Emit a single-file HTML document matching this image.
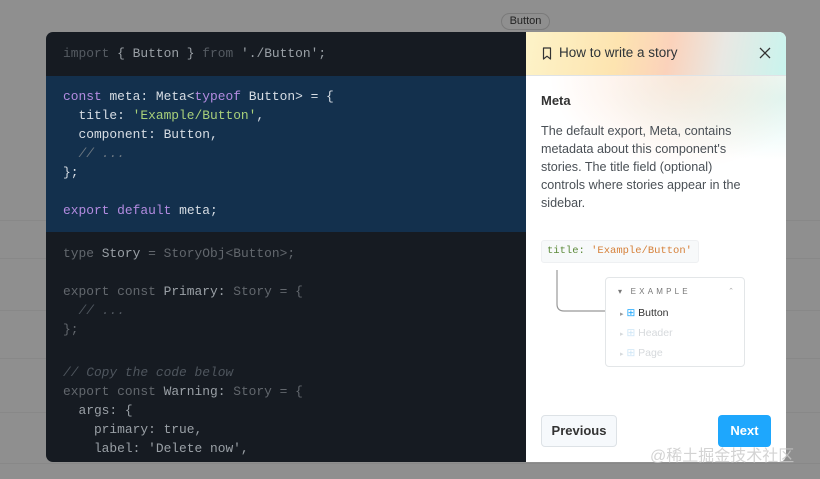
<!DOCTYPE html>
<html><head><meta charset="utf-8"><style>
*{margin:0;padding:0;box-sizing:border-box}
body{width:820px;height:479px;background:#8f8f8f;position:relative;overflow:hidden;font-family:"Liberation Sans",sans-serif}
.bl{position:absolute;height:1px;background:#888;left:0;right:0}
.tag{position:absolute;left:501px;top:13px;width:49px;height:17px;border:1px solid #7a7a7a;border-radius:9px;font-size:11px;color:#222;text-align:center;line-height:15px}
.modal{position:absolute;left:46px;top:32px;width:740px;height:430px;border-radius:7px;overflow:hidden;display:flex}
.code{width:480px;background:#161b22;font-family:"Liberation Mono",monospace;font-size:12.9px;color:#62676d;position:relative}
.code .l{position:absolute;left:17px;white-space:pre;line-height:19px}
.hl{position:absolute;left:0;top:44px;width:480px;height:156px;background:#13304d}
.w{color:#d7dde4}.k{color:#b38be0}.s{color:#a8d07a}.c{color:#6b7681;font-style:italic}
.d{color:#555b62}.b{color:#9aa0a6}
.side{flex:1;background:#fff;position:relative;font-family:"Liberation Sans",sans-serif}
.hdr{height:44px;border-bottom:1px solid #dfe3e6;background:linear-gradient(100deg,#fdf3c8 0%,#fde4b0 35%,#fbd2bb 55%,#e9e8e3 75%,#c9f4ee 100%);position:relative}
.glow{position:absolute;left:0;top:44px;width:260px;height:110px;background:radial-gradient(ellipse at 60% 0%,rgba(252,214,190,.55),rgba(255,255,255,0) 60%),radial-gradient(ellipse at 100% 20%,rgba(200,244,238,.6),rgba(255,255,255,0) 50%)}
</style></head><body>
<div class="bl" style="top:220px"></div><div class="bl" style="top:258px"></div><div class="bl" style="top:310px"></div><div class="bl" style="top:358px"></div><div class="bl" style="top:412px"></div><div class="bl" style="top:463px"></div>
<div class="tag">Button</div>
<div class="modal">
<div class="code">
<div class="hl"></div>
<div class="l" style="top:12px"><span class="d">import</span> <span class="b">{ Button }</span> <span class="d">from</span> <span class="b">'./Button';</span></div>
<div class="l" style="top:55px"><span class="k">const</span> <span class="w">meta: Meta&lt;</span><span class="k">typeof</span> <span class="w">Button&gt; = {</span></div>
<div class="l w" style="top:74px">  title: <span class="s">'Example/Button'</span>,</div>
<div class="l w" style="top:93px">  component: Button,</div>
<div class="l c" style="top:112px">  // ...</div>
<div class="l w" style="top:131px">};</div>
<div class="l" style="top:169px"><span class="k">export</span> <span class="k">default</span> <span class="w">meta;</span></div>
<div class="l" style="top:212px">type <span class="b">Story</span> = StoryObj&lt;Button&gt;;</div>
<div class="l" style="top:250px">export const <span class="b">Primary:</span> Story = {</div>
<div class="l c" style="top:269px;color:#4f565e">  // ...</div>
<div class="l" style="top:288px">};</div>
<div class="l" style="top:331px;font-style:italic;color:#4f565e">// Copy the code below</div>
<div class="l" style="top:350px">export const <span class="b">Warning:</span> Story = {</div>
<div class="l b" style="top:369px">  args: {</div>
<div class="l b" style="top:388px">    primary: true,</div>
<div class="l b" style="top:407px">    label: 'Delete now',</div>
</div>
<div class="side">
<div class="hdr">
<svg style="position:absolute;left:16px;top:15px" width="10" height="13" viewBox="0 0 10 13"><path d="M1.5 1h7v11L5 9.2 1.5 12z" fill="none" stroke="#333" stroke-width="1.2" stroke-linejoin="round"/></svg>
<div style="position:absolute;left:33px;top:13px;font-size:13.5px;color:#2e3438">How to write a story</div>
<svg style="position:absolute;left:233px;top:15px" width="12" height="12" viewBox="0 0 12 12"><path d="M1 1l10 10M11 1L1 11" stroke="#333" stroke-width="1.3"/></svg>
</div>
<div class="glow"></div>
<div style="position:absolute;left:15px;top:61px;font-size:13px;font-weight:bold;color:#333">Meta</div>
<div style="position:absolute;left:15px;top:90px;font-size:12.6px;line-height:18px;color:#4a5056;white-space:nowrap">The default export, Meta, contains<br>metadata about this component's<br>stories. The title field (optional)<br>controls where stories appear in the<br>sidebar.</div>
<div style="position:absolute;left:15px;top:208px;width:158px;height:23px;background:#f7f9fa;border:1px solid #eef0f2;border-radius:3px;font-family:'Liberation Mono',monospace;font-size:10.5px;line-height:21px;padding-left:5px;color:#5c8a3a;white-space:nowrap">title: <span style="color:#d6813a">'Example/Button'</span></div>
<svg style="position:absolute;left:28px;top:236px" width="60" height="50" viewBox="0 0 60 50"><path d="M3 2v34q0 7 7 7h47M53 40l4 3-4 3" fill="none" stroke="#999" stroke-width="1.2"/></svg>
<div style="position:absolute;left:79px;top:245px;width:140px;height:90px;border:1px solid #e3e6e8;border-radius:4px;background:#fff">
<div style="position:absolute;left:12px;top:9px;font-size:8px;letter-spacing:3.2px;color:#777">▾ EXAMPLE</div>
<div style="position:absolute;right:10px;top:9px;font-size:7px;color:#aaa">⌃</div>
<div style="position:absolute;left:14px;top:29px;font-size:10.5px;color:#333"><span style="font-size:7px;color:#999">▸</span> <span style="color:#1ea7fd">⊞</span> Button</div>
<div style="position:absolute;left:14px;top:49px;font-size:10.5px;color:#d6d9dc"><span style="font-size:7px">▸</span> <span style="color:#cfe6f6">⊞</span> Header</div>
<div style="position:absolute;left:14px;top:69px;font-size:10.5px;color:#d6d9dc"><span style="font-size:7px">▸</span> <span style="color:#cfe6f6">⊞</span> Page</div>
</div>
<div style="position:absolute;left:15px;top:383px;width:76px;height:32px;border:1px solid #dde2e6;border-radius:4px;background:#f6f9fc;font-size:13px;font-weight:bold;color:#333;text-align:center;line-height:30px">Previous</div>
<div style="position:absolute;left:192px;top:383px;width:53px;height:32px;border-radius:4px;background:#1ea7fd;font-size:13px;font-weight:bold;color:#fff;text-align:center;line-height:32px">Next</div>
</div>
</div>
<div style="position:absolute;left:650px;top:442px;font-size:16px;color:rgba(200,200,200,.8);font-family:'Liberation Sans','Noto Sans CJK SC',sans-serif">@稀土掘金技术社区</div>
</body></html>
